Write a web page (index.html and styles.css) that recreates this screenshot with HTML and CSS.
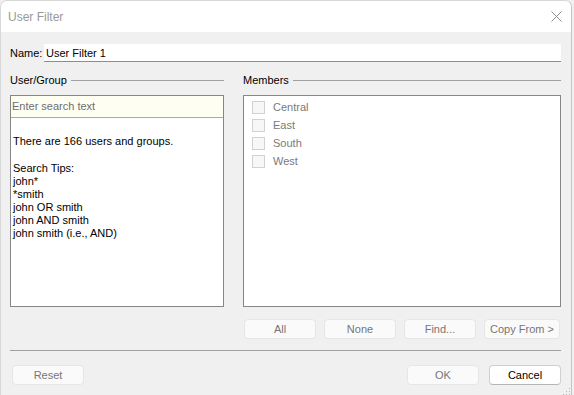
FILE: index.html
```html
<!DOCTYPE html>
<html>
<head>
<meta charset="utf-8">
<link rel="stylesheet" href="styles.css">
</head>
<body>
<div class="window">
  <div class="titlebar">
    <span class="title">User Filter</span>
    <svg class="close" width="11" height="11" viewBox="0 0 11 11"><path d="M0.5 0.5 L10.5 10.5 M10.5 0.5 L0.5 10.5" stroke="#8c8c8c" stroke-width="1" fill="none"/></svg>
  </div>
  <div class="content">
    <div class="name-row">
      <span class="name-label">Name:</span>
      <div class="name-input">User Filter 1</div>
    </div>
    <div class="columns">
      <div class="col left">
        <div class="group-head"><span>User/Group</span><div class="rule"></div></div>
        <div class="box">
          <div class="search">Enter search text</div>
          <div class="info">
            <p>There are 166 users and groups.</p>
            <p>Search Tips:<br>john*<br>*smith<br>john OR smith<br>john AND smith<br>john smith (i.e., AND)</p>
          </div>
        </div>
      </div>
      <div class="col right">
        <div class="group-head"><span>Members</span><div class="rule"></div></div>
        <div class="box members">
          <div class="member"><span class="cb"></span>Central</div>
          <div class="member"><span class="cb"></span>East</div>
          <div class="member"><span class="cb"></span>South</div>
          <div class="member"><span class="cb"></span>West</div>
        </div>
        <div class="btn-row">
          <div class="btn">All</div>
          <div class="btn">None</div>
          <div class="btn">Find...</div>
          <div class="btn">Copy From &gt;</div>
        </div>
      </div>
    </div>
    <div class="separator"></div>
    <div class="footer">
      <div class="btn">Reset</div>
      <div class="spacer"></div>
      <div class="btn">OK</div>
      <div class="btn cancel">Cancel</div>
    </div>
  </div>
  <div class="grip"></div>
</div>
</body>
</html>
```
FILE: styles.css
```css
html, body {
  margin: 0;
  padding: 0;
  background: #f0f0f0;
}
body {
  width: 574px;
  height: 395px;
  overflow: hidden;
  font-family: "Liberation Sans", Arial, sans-serif;
  font-size: 11px;
  color: #000;
}
.window {
  position: relative;
  width: 572px;
  height: 400px;
  background: #f0f0f0;
  border-right: 1px solid #c4c4c4;
  border-top: 1px solid #d8d8d8;
  border-left: 1px solid #d8d8d8;
  border-radius: 7px 7px 0 0;
  box-sizing: border-box;
  overflow: hidden;
}
.titlebar {
  height: 31px;
  background: #ffffff;
  display: flex;
  align-items: center;
  justify-content: space-between;
  padding: 0 9px 0 7px;
}
.title {
  font-size: 12px;
  color: #999999;
  font-family: "Liberation Sans", Arial, sans-serif;
}
.close {
  display: block;
}
.content {
  padding: 12px 10px 0 9px;
}
.name-row {
  display: flex;
  align-items: center;
  height: 18px;
}
.name-label {
  width: 34px;
}
.name-input {
  flex: 1;
  height: 18px;
  line-height: 18px;
  background: #ffffff;
  border-bottom: 1px solid #8d8d8d;
  box-sizing: border-box;
  padding-left: 2px;
}
.columns {
  display: flex;
  gap: 19px;
  margin-top: 11px;
}
.col.left {
  width: 214px;
}
.col.right {
  flex: 1;
}
.group-head {
  display: flex;
  align-items: center;
  gap: 4px;
  height: 14px;
  color: #000;
}
.rule {
  flex: 1;
  height: 1px;
  background: #a0a0a0;
  margin-top: 1px;
}
.box {
  margin-top: 8px;
  height: 212px;
  background: #ffffff;
  border: 1px solid #868686;
  box-sizing: border-box;
}
.search {
  height: 22px;
  line-height: 20px;
  background: #fefef2;
  border-bottom: 1px solid #a8a8a8;
  box-sizing: border-box;
  color: #6e6e6e;
  padding-left: 1px;
}
.info {
  padding: 17px 2px 0 2px;
  line-height: 13px;
}
.info p {
  margin: 0 0 14px 0;
}
.members {
  padding: 2px 0 0 8px;
}
.member {
  display: flex;
  align-items: center;
  height: 18px;
  color: #7a7a7a;
}
.cb {
  width: 13px;
  height: 13px;
  box-sizing: border-box;
  border: 1px solid #d2d2d2;
  background: #f7f7f7;
  margin-right: 8px;
}
.btn-row {
  display: flex;
  gap: 8px;
  margin-top: 12px;
  padding-left: 1px;
}
.btn {
  width: 72px;
  height: 20px;
  box-sizing: border-box;
  border: 1px solid #e6e6e6;
  border-radius: 4px;
  background: #fafafa;
  color: #767676;
  display: flex;
  align-items: center;
  justify-content: center;
  font-size: 11px;
}
.btn-row .btn:last-child {
  width: 76px;
}
.separator {
  height: 1px;
  background: #a0a0a0;
  margin-top: 11px;
}
.footer {
  display: flex;
  gap: 10px;
  margin-top: 14px;
  padding-left: 2px;
}
.spacer {
  flex: 1;
}
.btn.cancel {
  background: #ffffff;
  border: 1px solid #d0d0d0;
  border-bottom-color: #b5b5b5;
  color: #000;
}
.grip {
  position: absolute;
  right: 1px;
  bottom: 5px;
  width: 8px;
  height: 8px;
  background-image: radial-gradient(circle, #b5b5b5 0.8px, transparent 1px);
  background-size: 3px 3px;
  clip-path: polygon(100% 0, 100% 100%, 0 100%);
}
```
